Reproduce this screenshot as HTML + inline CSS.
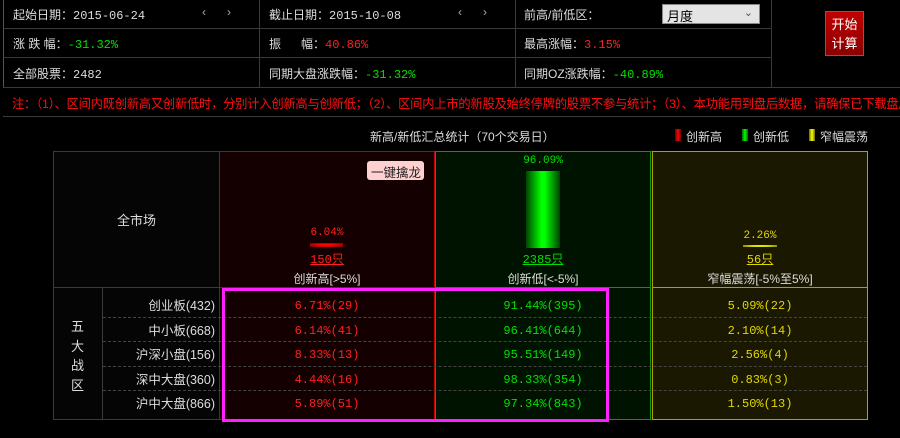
<!DOCTYPE html>
<html><head><meta charset="utf-8"><style>
*{margin:0;padding:0;box-sizing:border-box}
body{width:900px;height:438px;background:#000;overflow:hidden;position:relative;font-family:"Liberation Sans","Noto Sans CJK SC",sans-serif;font-size:12px;color:#ddd}
.a{position:absolute;white-space:nowrap}
.hl{position:absolute;height:1px;background:#3a3a3a}
.vl{position:absolute;width:1px;background:#3a3a3a}
.g{color:#00e000}.r{color:#ff2020}.y{color:#e0d800}
.mono{font-family:"Liberation Mono","Noto Sans CJK SC",monospace}
.c{text-align:center}
.dash{position:absolute;height:0;border-top:1px dashed #444}
</style></head><body>
<div class="vl" style="left:3px;top:0;height:88px;background:#555"></div>
<div class="hl" style="left:3px;top:28px;width:769px"></div>
<div class="hl" style="left:3px;top:57px;width:769px"></div>
<div class="hl" style="left:3px;top:87px;width:897px"></div>
<div class="hl" style="left:3px;top:116px;width:897px"></div>
<div class="vl" style="left:259px;top:0;height:87px"></div>
<div class="vl" style="left:515px;top:0;height:87px"></div>
<div class="vl" style="left:771px;top:0;height:87px"></div>

<div class="a" style="left:13px;top:6px">起始日期：<span class="mono">2015-06-24</span></div>
<div class="a" style="left:202px;top:5px;color:#aaa">‹</div>
<div class="a" style="left:227px;top:5px;color:#aaa">›</div>
<div class="a" style="left:269px;top:6px">截止日期：<span class="mono">2015-10-08</span></div>
<div class="a" style="left:458px;top:5px;color:#aaa">‹</div>
<div class="a" style="left:483px;top:5px;color:#aaa">›</div>
<div class="a" style="left:524px;top:6px">前高/前低区：</div>
<div class="a" style="left:662px;top:4px;width:98px;height:20px;background:#e4e4e4;border:1px solid #888;color:#000;padding:1px 0 0 4px;font-size:13px">月度<span style="position:absolute;right:6px;top:1px;color:#555;font-size:11px">⌄</span></div>
<div class="a" style="left:825px;top:11px;width:39px;height:45px;background:linear-gradient(#c00000,#8a0000);border:1px solid #e03030;color:#fff;font-size:13px;line-height:19px;text-align:center;padding-top:3px">开始<br>计算</div>

<div class="a" style="left:13px;top:35px">涨 跌 幅：<span class="g mono">-31.32%</span></div>
<div class="a" style="left:269px;top:35px">振&nbsp;&nbsp;&nbsp;&nbsp;&nbsp;&nbsp;幅：<span class="r mono">40.86%</span></div>
<div class="a" style="left:524px;top:35px">最高涨幅：<span class="r mono">3.15%</span></div>
<div class="a" style="left:13px;top:65px">全部股票：<span class="mono">2482</span></div>
<div class="a" style="left:269px;top:65px">同期大盘涨跌幅：<span class="g mono">-31.32%</span></div>
<div class="a" style="left:524px;top:65px">同期OZ涨跌幅：<span class="g mono">-40.89%</span></div>
<div class="a" style="left:12px;top:94px;color:#ff1010;font-size:12.3px;letter-spacing:-0.25px">注：（1）、区间内既创新高又创新低时，分别计入创新高与创新低；（2）、区间内上市的新股及始终停牌的股票不参与统计；（3）、本功能用到盘后数据，请确保已下载盘后数据</div>

<div class="a" style="left:370px;top:128px">新高/新低汇总统计（70个交易日）</div>
<div class="a" style="left:675px;top:129px;width:6px;height:12px;background:linear-gradient(90deg,#600,#f00,#600)"></div>
<div class="a" style="left:686px;top:128px">创新高</div>
<div class="a" style="left:742px;top:129px;width:6px;height:12px;background:linear-gradient(90deg,#060,#0f0,#060)"></div>
<div class="a" style="left:753px;top:128px">创新低</div>
<div class="a" style="left:809px;top:129px;width:6px;height:12px;background:linear-gradient(90deg,#660,#ff0,#660)"></div>
<div class="a" style="left:820px;top:128px">窄幅震荡</div>

<div class="a" style="left:53px;top:151px;width:815px;height:269px;border:1px solid #3a3a3a;background:#050505"></div>
<div class="a" style="left:219px;top:151px;width:216px;height:269px;border:1px solid #c00000;background:#140000"></div>
<div class="a" style="left:435px;top:151px;width:216px;height:269px;border:1px solid #00a000;background:#001200"></div>
<div class="a" style="left:652px;top:151px;width:216px;height:269px;border:1px solid #b0a000;background:#1a1800"></div>
<div class="hl" style="left:53px;top:287px;width:166px"></div>
<div class="a" style="left:219px;top:287px;width:216px;height:1px;background:#c00000"></div>
<div class="a" style="left:435px;top:287px;width:216px;height:1px;background:#00a000"></div>
<div class="a" style="left:652px;top:287px;width:216px;height:1px;background:#b0a000"></div>
<div class="vl" style="left:102px;top:288px;height:131px"></div>
<div class="dash" style="left:103px;top:317px;width:764px"></div>
<div class="dash" style="left:103px;top:341px;width:764px"></div>
<div class="dash" style="left:103px;top:366px;width:764px"></div>
<div class="dash" style="left:103px;top:390px;width:764px"></div>

<div class="a" style="left:117px;top:210px;font-size:13px">全市场</div>
<div class="a" style="left:367px;top:161px;width:57px;height:19px;background:#ffd0d0;border-radius:3px;color:#222;font-size:12.5px;padding:1px 0 0 4px">一键擒龙</div>
<div class="a c r mono" style="left:219px;top:227px;width:216px;font-size:11px">6.04%</div>
<div class="a" style="left:310px;top:243px;width:33px;height:4px;background:radial-gradient(ellipse,#f00 30%,#600 100%)"></div>
<div class="a c r mono" style="left:219px;top:250px;width:216px;text-decoration:underline">150只</div>
<div class="a c" style="left:219px;top:270px;width:216px">创新高[&gt;5%]</div>

<div class="a c g mono" style="left:435px;top:155px;width:216px;font-size:11px">96.09%</div>
<div class="a" style="left:526px;top:171px;width:34px;height:77px;background:linear-gradient(90deg,#040 0%,#0f0 45%,#0f0 55%,#040 100%)"></div>
<div class="a c g mono" style="left:435px;top:250px;width:216px;text-decoration:underline">2385只</div>
<div class="a c" style="left:435px;top:270px;width:216px">创新低[&lt;-5%]</div>

<div class="a c y mono" style="left:652px;top:230px;width:216px;font-size:11px">2.26%</div>
<div class="a" style="left:743px;top:245px;width:34px;height:2px;background:radial-gradient(ellipse,#ff0 30%,#660 100%)"></div>
<div class="a c y mono" style="left:652px;top:250px;width:216px;text-decoration:underline">56只</div>
<div class="a c" style="left:652px;top:270px;width:216px">窄幅震荡[-5%至5%]</div>

<div class="a" style="left:71px;top:317px;font-size:13px;line-height:19.5px;width:14px">五<br>大<br>战<br>区</div>

<div class="a" style="left:103px;top:294px;width:112px;text-align:right;line-height:24.5px;font-size:12.5px">创业板(432)<br>中小板(668)<br>沪深小盘(156)<br>深中大盘(360)<br>沪中大盘(866)</div>
<div class="a c r mono" style="left:219px;top:294px;width:216px;line-height:24.5px">6.71%(29)<br>6.14%(41)<br>8.33%(13)<br>4.44%(16)<br>5.89%(51)</div>
<div class="a c g mono" style="left:435px;top:294px;width:216px;line-height:24.5px">91.44%(395)<br>96.41%(644)<br>95.51%(149)<br>98.33%(354)<br>97.34%(843)</div>
<div class="a c y mono" style="left:652px;top:294px;width:216px;line-height:24.5px">5.09%(22)<br>2.10%(14)<br>2.56%(4)<br>0.83%(3)<br>1.50%(13)</div>

<div class="a" style="left:222px;top:288px;width:387px;height:134px;border:3px solid #ff20ff"></div>
</body></html>
